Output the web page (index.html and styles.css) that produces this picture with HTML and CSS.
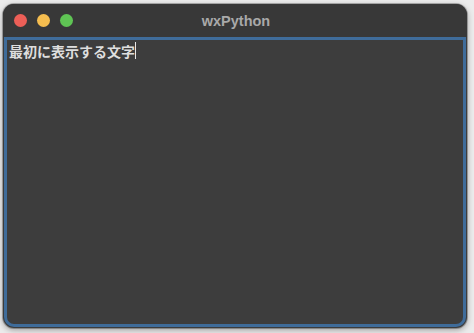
FILE: index.html
```html
<!DOCTYPE html>
<html lang="ja">
<head>
    <meta charset="UTF-8">
    <title>wxPython</title>
    <link rel="stylesheet" href="styles.css">
</head>
<body>
    <div class="window">
        <div class="titlebar">
            <div class="lights">
                <span class="light red"></span>
                <span class="light yellow"></span>
                <span class="light green"></span>
            </div>
            <div class="title">wxPython</div>
            <div class="spacer"></div>
        </div>
        <div class="editor">
            <span class="text">最初に表示する文字</span><span class="caret"></span>
        </div>
    </div>
</body>
</html>
```

FILE: styles.css
```css
html, body {
    margin: 0;
    height: 100%;
}

body {
    background-color: #ececec;
    font-family: 'Noto Sans CJK JP', 'Noto Sans', sans-serif;
    padding: 4px 7px 5px 3px;
    box-sizing: border-box;
}

.window {
    height: 100%;
    display: flex;
    flex-direction: column;
    background-color: #3c3c3c;
    border-radius: 11px;
    overflow: hidden;
    box-shadow: 0 2px 6px rgba(0, 0, 0, 0.35), 0 0 0 1px rgba(0, 0, 0, 0.25);
}

.titlebar {
    height: 33px;
    flex: none;
    display: grid;
    grid-template-columns: 1fr auto 1fr;
    align-items: center;
    background-color: #383838;
}

.lights {
    display: flex;
    gap: 10px;
    padding-left: 11px;
}

.light {
    width: 13px;
    height: 13px;
    border-radius: 50%;
}

.light.red { background-color: #ed5f57; }
.light.yellow { background-color: #f5bd4f; }
.light.green { background-color: #5fc454; }

.title {
    font-family: 'Liberation Sans', Arial, sans-serif;
    font-weight: bold;
    font-size: 14.5px;
    color: #a9a9a9;
    padding-left: 2px;
}

.editor {
    flex: 1;
    margin: 0 1px 1px 1px;
    border: 3px solid #3f6c9a;
    border-radius: 0 0 10px 10px;
    background-color: #3d3d3d;
    padding: 2px 0 0 2px;
    display: flex;
    align-items: flex-start;
}

.text {
    font-size: 14px;
    font-weight: bold;
    line-height: 18px;
    color: #dedede;
}

.caret {
    width: 1px;
    height: 17px;
    margin-left: 0;
    background-color: #e6e6e6;
}
```
